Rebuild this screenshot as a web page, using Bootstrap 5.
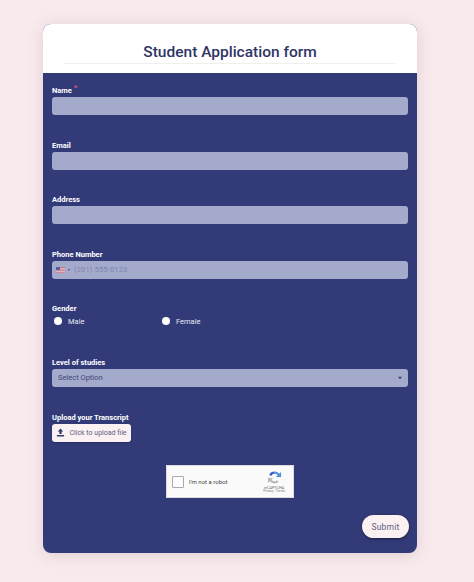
<!DOCTYPE html>
<html lang="en">
<head>
<meta charset="utf-8">
<title>Student Application form</title>
<link rel="stylesheet" href="https://cdn.jsdelivr.net/npm/bootstrap@5.3.0/dist/css/bootstrap.min.css">
<style>
html,body{height:100%}
body{background:#f9ebed;font-family:Roboto,"Noto Sans",sans-serif;overflow:hidden}
.page-wrap{padding:24px 57px 0 43px}
.app-card{width:374px;height:529px;border:0;border-radius:8px;overflow:hidden;box-shadow:0 2px 16px rgba(90,50,60,.16);background:#323b78}
.app-head{background:#fff;height:49px;padding:17px 21px 0}
.app-title{font-family:Roboto,sans-serif;font-size:15.5px;line-height:22px;font-weight:500;color:#2f3566;margin:0;text-align:center;border-bottom:1px solid #f0f0ea;height:23px}
.app-body{padding:12px 9px 0;color:#fff}
.fld{min-height:54.5px}
.fld-short{min-height:54px}
.fld-label{font-size:7.5px;line-height:12px;font-weight:700;color:#fff;margin:0;display:block}
.req{color:#d9536f;font-size:8px;vertical-align:3px;line-height:0}
.fld-input,.fld-input:focus{background-color:#a3aacc;border:0;border-radius:3px;height:18px;min-height:0;padding:0 6px;font-size:7.5px;color:#41477a;box-shadow:none}
.phone-box{background:#a3aacc;border-radius:3px;height:18px;padding:0 4px}
.phone-box input{background:transparent;border:0;outline:0;font-size:7.5px;color:#41477a;padding:0;margin-left:4px;flex:1;min-width:0;height:18px;letter-spacing:.15px}
.phone-box input::placeholder{color:#7f86ae;opacity:1}
.caret-mini{width:0;height:0;border-left:1.5px solid transparent;border-right:1.5px solid transparent;border-top:2px solid #444a78;margin-left:3px}
.radio-row{padding:0 0 0 2px}
.radio-opt{width:108px;margin:0;padding:0;min-height:0;gap:6px;height:12px}
.radio-opt .form-check-input{width:8px;height:8px;margin:0;background:#fff;border:0;flex:none}
.radio-opt .form-check-label{font-size:7.5px;line-height:12px;color:#e8e9f3;padding-top:1px}
.fld-select{background-size:10px 10px;background-position:right 3px center;padding:0 16px 0 6px;background-image:url("data:image/svg+xml,%3csvg xmlns='http://www.w3.org/2000/svg' viewBox='0 0 8 8'%3e%3cpath fill='%23333a70' d='M2.5 3h3L4 5z'/%3e%3c/svg%3e")}
.upload-btn{background:#fbf0f2;color:#5d5f80;font-size:7px;line-height:12px;font-weight:400;border:0;border-radius:3px;height:18px;width:79px;padding:0;gap:4px;box-shadow:0 1px 2px rgba(0,0,0,.25);white-space:nowrap}
.upload-btn:hover{background:#fbf0f2;color:#5d5f80}
.captcha-row{height:50px;margin-top:-1px}
.captcha-box{width:128px;height:33px;background:#fafafa;border:1px solid #dcdcdc;padding:0 4px 0 5px}
.captcha-tick{width:12px;height:12px;background:#fff;border:1px solid #a8a8a8;border-radius:1px;flex:none}
.captcha-text{font-size:6px;color:#444;margin-left:5px;flex:1}
.captcha-logo{width:30px;line-height:1}
.captcha-logo svg{display:block;width:15px;height:15px}
.captcha-name{font-size:3.8px;color:#666;margin-top:1px}
.captcha-terms{font-size:3.2px;color:#777;margin-top:1px}
.submit-row{margin-right:-1px}
.submit-btn{background:#fbf0f2;color:#5e5f82;font-size:8.5px;line-height:12px;font-weight:400;border:0;border-radius:11.5px;width:47px;height:23px;padding:0;box-shadow:0 1px 3px rgba(0,0,0,.5);letter-spacing:.2px}
.submit-btn:hover{background:#fbf0f2;color:#5e5f82}
</style>
</head>
<body>
<div class="page-wrap">
  <div class="card app-card">
    <div class="app-head"><h1 class="app-title">Student Application form</h1></div>
    <form class="app-body">
      <div class="fld">
        <label class="fld-label">Name <span class="req">*</span></label>
        <input type="text" class="form-control fld-input">
      </div>
      <div class="fld">
        <label class="fld-label">Email</label>
        <input type="text" class="form-control fld-input">
      </div>
      <div class="fld">
        <label class="fld-label">Address</label>
        <input type="text" class="form-control fld-input">
      </div>
      <div class="fld">
        <label class="fld-label">Phone Number</label>
        <div class="phone-box d-flex align-items-center">
          <svg width="9" height="6" viewBox="0 0 9 6" aria-hidden="true"><rect width="9" height="6" fill="#e8dfe6"/><path d="M0 .5h9M0 2.100h9M0 3.700h9M0 5.300h9" stroke="#c8576a" stroke-width=".8"/><rect width="4" height="3" fill="#5660a0"/></svg>
          <span class="caret-mini"></span>
          <input type="text" placeholder="(201) 555-0123">
        </div>
      </div>
      <div class="fld fld-short">
        <label class="fld-label">Gender</label>
        <div class="radio-row d-flex">
          <div class="form-check radio-opt d-flex align-items-center"><input class="form-check-input" type="radio" name="g" id="gm"><label class="form-check-label" for="gm">Male</label></div>
          <div class="form-check radio-opt d-flex align-items-center"><input class="form-check-input" type="radio" name="g" id="gf"><label class="form-check-label" for="gf">Female</label></div>
        </div>
      </div>
      <div class="fld">
        <label class="fld-label">Level of studies</label>
        <select class="form-select fld-input fld-select"><option>Select Option</option></select>
      </div>
      <div class="fld">
        <label class="fld-label">Upload your Transcript</label>
        <button type="button" class="btn upload-btn d-flex align-items-center justify-content-center">
          <svg width="9" height="9" viewBox="0 0 8 8" aria-hidden="true"><path fill="#333a70" d="M4 .5 6.400 3H5v2.400H3V3H1.600zM.8 6.200h6.400v1.300H.8z"/></svg>
          Click to upload file
        </button>
      </div>
      <div class="captcha-row d-flex justify-content-center">
        <div class="captcha-box d-flex align-items-center">
          <span class="captcha-tick"></span>
          <span class="captcha-text">I'm not a robot</span>
          <div class="captcha-logo d-flex flex-column align-items-center">
            <svg viewBox="0 0 16 16" aria-hidden="true"><path fill="#4a90e2" d="M8 1.500a6.500 6.500 0 0 1 5 2.400L15 2v5.500H9.500l2-2A4 4 0 0 0 8 4z"/><path fill="#3b5fc4" d="M8 1.500A6.500 6.500 0 0 0 2.300 5L4.500 6.400A4 4 0 0 1 8 4z"/><path fill="#b8b8b8" d="M1.500 8H1v6l2-2a6.500 6.500 0 0 0 9.600.6l-1.800-1.800A4 4 0 0 1 4.600 10.500L6.500 8.500H1.500z"/></svg>
            <span class="captcha-name">reCAPTCHA</span>
            <span class="captcha-terms">Privacy - Terms</span>
          </div>
        </div>
      </div>
      <div class="submit-row d-flex justify-content-end">
        <button type="button" class="btn submit-btn">Submit</button>
      </div>
    </form>
  </div>
</div>
<script src="https://cdn.jsdelivr.net/npm/bootstrap@5.3.0/dist/js/bootstrap.bundle.min.js"></script>
</body>
</html>
